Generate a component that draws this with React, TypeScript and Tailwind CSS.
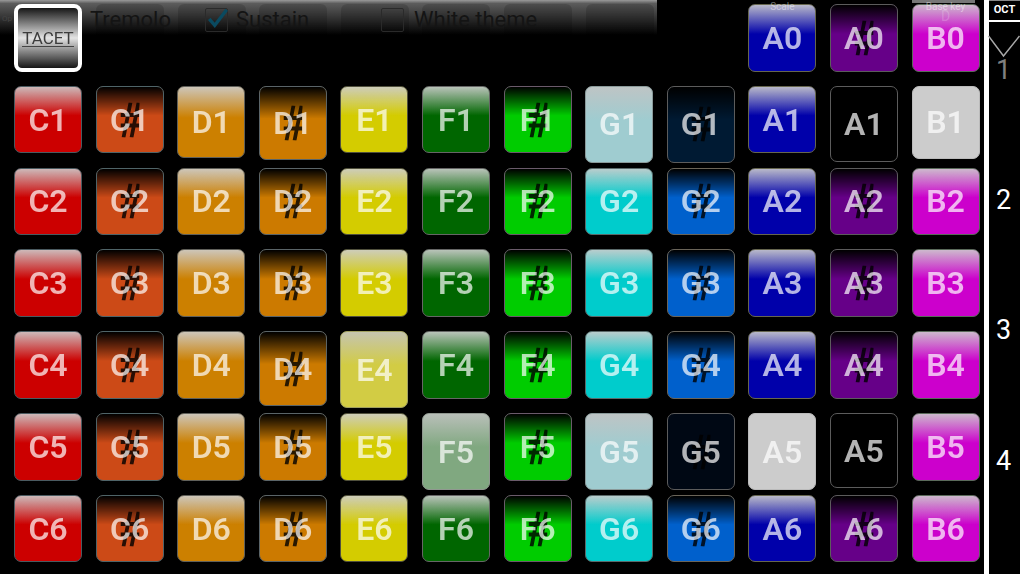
import React from "react";

type Kind = "c" | "cs" | "d" | "ds" | "e" | "f" | "fs" | "g" | "gs" | "a" | "as" | "b";

const NOTES: { kind: Kind; label: string; sharp: boolean; bg: string }[] = [
  { kind: "c", label: "C", sharp: false, bg: "bg-[#cc0000] border-[#4a5a60]" },
  { kind: "cs", label: "C", sharp: true, bg: "bg-[#cc4a17] border-[#4f6468]" },
  { kind: "d", label: "D", sharp: false, bg: "bg-[#cc8000] border-[#60605a]" },
  { kind: "ds", label: "D", sharp: true, bg: "bg-[#cc7a00] border-[#5a6468]" },
  { kind: "e", label: "E", sharp: false, bg: "bg-[#d4cc00] border-[#50503c]" },
  { kind: "f", label: "F", sharp: false, bg: "bg-[#006600] border-[#666666]" },
  { kind: "fs", label: "F", sharp: true, bg: "bg-[#00cc00] border-[#6a5a6a]" },
  { kind: "g", label: "G", sharp: false, bg: "bg-[#00cccc] border-[#5a6a6a]" },
  { kind: "gs", label: "G", sharp: true, bg: "bg-[#0060cc] border-[#6a6458]" },
  { kind: "a", label: "A", sharp: false, bg: "bg-[#0000aa] border-[#66664e]" },
  { kind: "as", label: "A", sharp: true, bg: "bg-[#660088] border-[#5c5c5c]" },
  { kind: "b", label: "B", sharp: false, bg: "bg-[#cc00cc] border-[#5a6a5a]" },
];

const GLOSS = "bg-[linear-gradient(rgba(205,205,205,0.9),rgba(205,205,205,0)_44%)]";
const SHADE = "bg-[linear-gradient(#000,rgba(0,0,0,0)_44%)]";
const PALE = "bg-[linear-gradient(rgba(195,195,195,0.85),rgba(195,195,195,0)_44%)]";

type Override = { h?: string; bg?: string; grad?: string };

const OVERRIDES: Record<string, Override> = {
  d1: { h: "h-[72px]" },
  ds1: { h: "h-[74px]" },
  g1: { h: "h-[77px]", bg: "bg-[#9fccd0] border-[#8a9a9a]", grad: PALE },
  gs1: { h: "h-[77px]", bg: "bg-[#001a33] border-[#5c5c5c]", grad: SHADE },
  as1: { h: "h-[76px]", bg: "bg-black border-[#5c5c5c]", grad: "" },
  b1: { h: "h-[73px]", bg: "bg-[#cccccc] border-[#bbbbbb]", grad: "" },
  ds4: { h: "h-[75px]" },
  e4: { h: "h-[77px]", bg: "bg-[#d2cc44] border-[#a0a060]", grad: PALE },
  f5: { h: "h-[77px]", bg: "bg-[#80a880] border-[#909890]", grad: PALE },
  g5: { h: "h-[77px]", bg: "bg-[#9fccd0] border-[#8a9a9a]", grad: PALE },
  gs5: { h: "h-[77px]", bg: "bg-[#000814] border-[#5c5c5c]", grad: "" },
  a5: { h: "h-[77px]", bg: "bg-[#cccccc] border-[#bbbbbb]", grad: "" },
  as5: { h: "h-[75px]", bg: "bg-black border-[#5c5c5c]", grad: "" },
};

function SharpMark() {
  return (
    <svg
      viewBox="0 0 19 35"
      className="absolute left-1/2 top-1/2 h-[35px] w-[19px] -translate-x-1/2 -translate-y-1/2 opacity-80"
      fill="none"
      stroke="#000"
      strokeWidth="3.8"
    >
      <path d="M10 0 L3 35 M18 0 L11 35 M0 12.5 H19 M0 23 H19" />
    </svg>
  );
}

function Key({ note, octave }: { note: (typeof NOTES)[number]; octave: number }) {
  const o = OVERRIDES[note.kind + octave] ?? {};
  const grad = o.grad ?? (note.sharp ? SHADE : GLOSS);
  return (
    <div className={`relative flex w-[68px] items-center justify-center rounded-[7px] border ${o.h ?? "h-[67.5px]"} ${o.bg ?? note.bg} ${grad}`}>
      {note.sharp && <SharpMark />}
      <span className="relative text-[32px] font-semibold leading-none text-white/70 blur-[0.4px]">
        {note.label}
        {octave}
      </span>
    </div>
  );
}

function Check({ checked }: { checked?: boolean }) {
  return (
    <span className="relative block h-[24px] w-[23px] rounded-[2px] border border-[#2a2a2a]">
      {checked && (
        <svg viewBox="0 0 24 24" className="absolute left-0 -top-[2px] h-[22px] w-[23px]" fill="none" stroke="#0a4a60" strokeWidth="3.6">
          <path d="M3 13 L9 20 L22 3" />
        </svg>
      )}
    </span>
  );
}

function TopBar() {
  return (
    <div className="absolute left-0 top-0 h-[35px] w-[657px] overflow-hidden bg-[linear-gradient(#9a9a9a,#5c5c5c_10%,#343434_50%,#000)]">
      <div className="flex h-full gap-[13.6px] pl-[96px] pt-[4px]">
        {[0, 1, 2, 3, 4, 5, 6].map((i) => (
          <div key={i} className="h-[40px] w-[68px] rounded-[6px] bg-black/15" />
        ))}
      </div>
      <span className="absolute left-[2px] top-[15px] text-[8px] leading-none text-[#444]">Op</span>
      <span className="absolute left-[90px] top-[7px] text-[22px] leading-[26px] text-[#141414]">Tremolo</span>
      <span className="absolute left-[205px] top-[8px]">
        <Check checked />
      </span>
      <span className="absolute left-[236px] top-[7px] text-[22px] leading-[26px] text-[#141414]">Sustain</span>
      <span className="absolute left-[381px] top-[8px]">
        <Check />
      </span>
      <span className="absolute left-[414px] top-[7px] text-[22px] leading-[26px] text-[#141414]">White theme</span>
    </div>
  );
}

function Sidebar() {
  return (
    <div className="relative h-full w-[36px] border-l-[5px] border-white pr-[2px] pt-[5px]">
      {[1, 2, 3, 4].map((n) => (
        <div
          key={n}
          className={`flex h-[130.3px] items-center justify-center text-[27px] leading-none ${n === 1 ? "text-[#808080]" : "text-white"}`}
        >
          {n}
        </div>
      ))}
      <div className="absolute left-0 top-0 h-[22px] w-full border-b-2 border-t border-b-white border-t-[#888] bg-black pt-[2px] text-center text-[11px] font-bold leading-[14px] text-white">
        OCT
      </div>
      <svg viewBox="0 0 31 24" className="absolute -left-[1px] top-[34px] h-[24px] w-[32px]" fill="none" stroke="#a8a8a8" strokeWidth="1.5">
        <path d="M0 2 L15 22 L31 2" />
      </svg>
    </div>
  );
}

function TopKey({ note, label, caption, ghost }: { note: (typeof NOTES)[number]; label: string; caption?: string; ghost?: string }) {
  const grad = note.sharp ? SHADE : GLOSS;
  return (
    <div className={`relative flex h-[67.5px] w-[68px] items-center justify-center rounded-[7px] border ${note.bg} ${grad}`}>
      {note.sharp && <SharpMark />}
      <span className="relative text-[32px] font-semibold leading-none text-white/70 blur-[0.4px]">{label}</span>
      {caption && (
        <span className="absolute -top-[4px] left-0 w-full text-center text-[10px] leading-[12px] text-white/45">{caption}</span>
      )}
      {ghost && <span className="absolute left-0 top-[4px] w-full text-center text-[14px] leading-[14px] text-white/20">{ghost}</span>}
    </div>
  );
}

export default function App() {
  return (
    <div className="relative flex h-[574px] w-[1020px] overflow-hidden bg-black font-['Roboto',sans-serif]">
      <TopBar />
      <div className="absolute left-[912px] top-0 h-[3px] w-[63px] bg-[#777]" />
      <main className="relative w-[984px] pl-[14px] pt-[4px]">
        <div className="grid grid-cols-[repeat(12,68px)] auto-rows-[67.5px] gap-x-[13.6px] gap-y-[14.33px]">
          <div className="flex h-[68px] w-[68px] items-center justify-center rounded-[8px] border-[4px] border-white bg-[linear-gradient(#161616,#e4e4e4_50%,#161616)]">
            <span className="border-b border-[#444] text-[17px] leading-[16px] text-[#3c3c3c] blur-[0.3px]">TACET</span>
          </div>
          <div className="col-start-10">
            <TopKey note={NOTES[9]} label="A0" caption="Scale" />
          </div>
          <div>
            <TopKey note={NOTES[10]} label="A0" />
          </div>
          <div>
            <TopKey note={NOTES[11]} label="B0" caption="Base key" ghost="D" />
          </div>
          {[1, 2, 3, 4, 5, 6].flatMap((octave) =>
            NOTES.map((note) => <Key key={note.kind + octave} note={note} octave={octave} />)
          )}
        </div>
      </main>
      <Sidebar />
    </div>
  );
}
